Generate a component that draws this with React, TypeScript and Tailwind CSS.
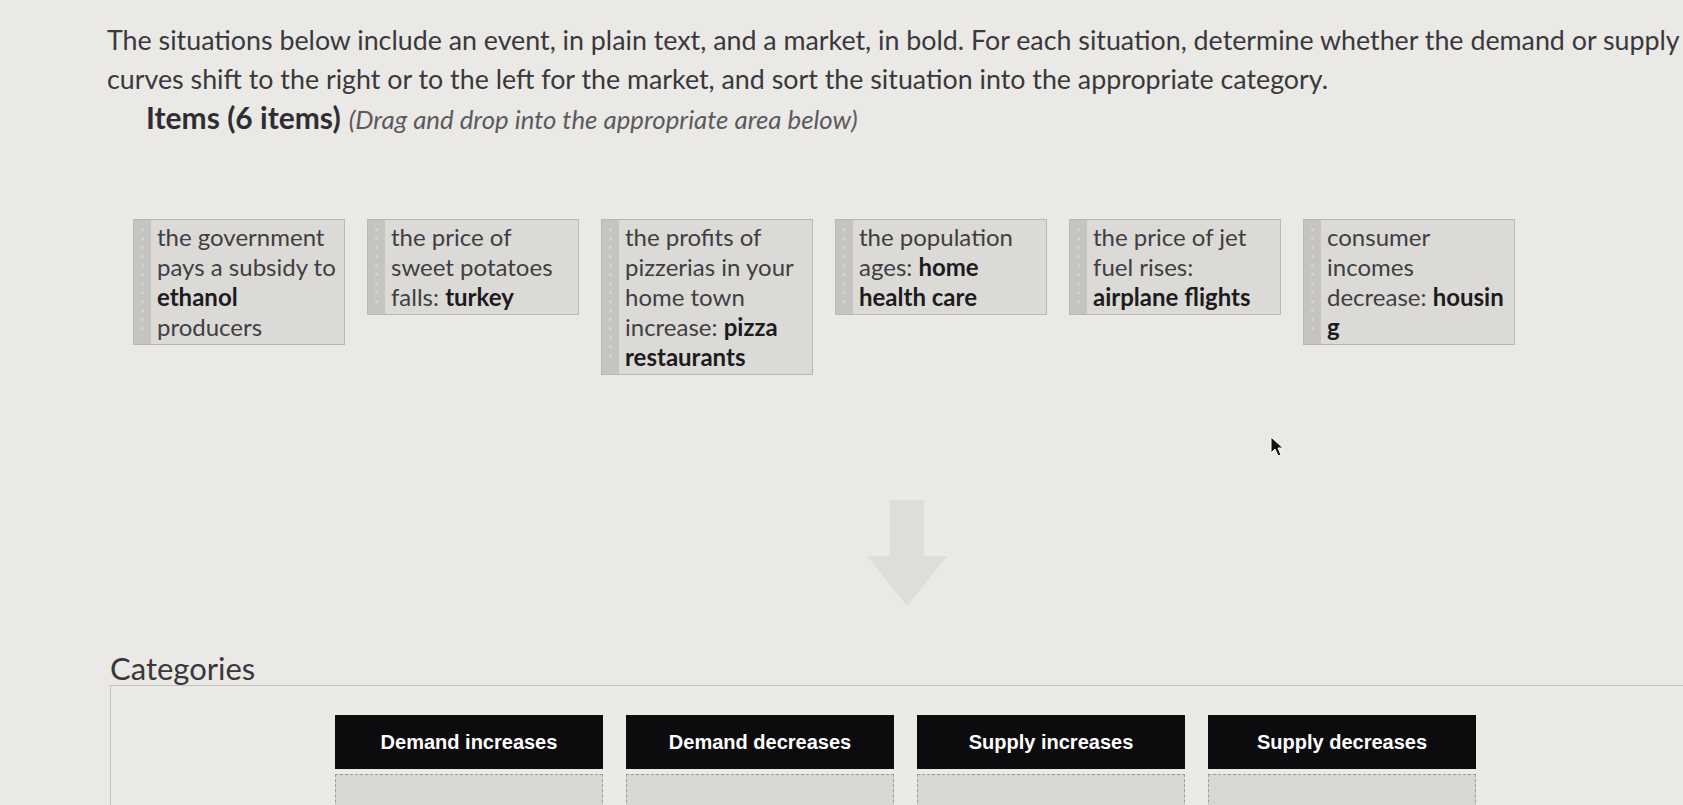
import React from "react";

type Seg = { t: string; b?: boolean };
const cards: Seg[][][] = [
  [[{ t: "the government" }], [{ t: "pays a subsidy to" }], [{ t: "ethanol", b: true }], [{ t: "producers" }]],
  [[{ t: "the price of" }], [{ t: "sweet potatoes" }], [{ t: "falls: " }, { t: "turkey", b: true }]],
  [
    [{ t: "the profits of" }],
    [{ t: "pizzerias in your" }],
    [{ t: "home town" }],
    [{ t: "increase: " }, { t: "pizza", b: true }],
    [{ t: "restaurants", b: true }],
  ],
  [[{ t: "the population" }], [{ t: "ages: " }, { t: "home", b: true }], [{ t: "health care", b: true }]],
  [[{ t: "the price of jet" }], [{ t: "fuel rises:" }], [{ t: "airplane flights", b: true }]],
  [[{ t: "consumer" }], [{ t: "incomes" }], [{ t: "decrease: " }, { t: "housin", b: true }], [{ t: "g", b: true }]],
];

const categories = ["Demand increases", "Demand decreases", "Supply increases", "Supply decreases"];

function Card({ lines }: { lines: Seg[][] }) {
  return (
    <div className="flex w-[212px] shrink-0 border border-[#b9b8b4] bg-[#dbdad6]">
      <div className="flex w-[17px] shrink-0 flex-col items-center justify-start gap-[6px] bg-[#c5c4c0] pt-[8px]">
        {lines.map((_, i) => (
          <React.Fragment key={i}>
            <div className="h-[3px] w-[3px] rounded-full bg-[#d6d5d1]" />
            <div className="h-[3px] w-[3px] rounded-full bg-[#d6d5d1]" />
            <div className="h-[3px] w-[3px] rounded-full bg-[#d6d5d1]" />
          </React.Fragment>
        ))}
      </div>
      <div className="py-[2px] pl-[6px] text-[24px] leading-[30px] text-[#403e43]">
        {lines.map((line, i) => (
          <div key={i} className="whitespace-nowrap">
            {line.map((s, j) =>
              s.b ? (
                <span key={j} className="font-bold text-[#1d1b20]">
                  {s.t}
                </span>
              ) : (
                <span key={j}>{s.t}</span>
              )
            )}
          </div>
        ))}
      </div>
    </div>
  );
}

export default function App() {
  return (
    <div
      className="relative h-[805px] w-[1683px] overflow-hidden bg-[#eae9e5]"
      style={{ fontFamily: "Lato, 'Open Sans', sans-serif" }}
    >
      <div className="pl-[107px] pt-[21px] text-[26.8px] leading-[39px] text-[#3a383d]">
        <div className="whitespace-nowrap">
          The situations below include an event, in plain text, and a market, in bold. For each situation, determine whether the demand or supply
        </div>
        <div className="whitespace-nowrap">
          curves shift to the right or to the left for the market, and sort the situation into the appropriate category.
        </div>
      </div>
      <div className="flex items-baseline gap-[8px] pl-[146px] leading-[36px]">
        <span className="text-[30px] font-bold text-[#2f2d32]">Items (6 items)</span>
        <span className="text-[25.8px] italic text-[#5c5a5f]">(Drag and drop into the appropriate area below)</span>
      </div>

      <div className="mt-[82px] flex items-start gap-[22px] pl-[133px]">
        {cards.map((c, i) => (
          <Card key={i} lines={c} />
        ))}
      </div>

      <div className="mt-[125px] flex pl-[867px]">
        <svg width="80" height="106" viewBox="0 0 80 106">
          <path d="M23 0 H57 V56 H80 L40 106 L0 56 H23 Z" fill="#dedddA" />
        </svg>
      </div>

      <div className="mt-[46px] pl-[110px] text-[31px] leading-[32px] text-[#3a383d]">Categories</div>

      <div className="ml-[110px] mt-[1px] h-[200px] border-l border-t border-[#c3c2be] bg-[#ebeae6] pl-[224px] pt-[29px]">
        <div className="flex gap-[23px]">
          {categories.map((c) => (
            <div key={c} className="flex w-[268px] flex-col">
              <div
                className="flex h-[54px] items-center justify-center bg-[#0c0c0e] text-[20px] font-bold text-white"
                style={{ fontFamily: "'Liberation Sans', Arial, sans-serif" }}
              >
                {c}
              </div>
              <div className="mt-[5px] h-[120px] border border-dashed border-[#9d9c99] bg-[#d8d7d3]" />
            </div>
          ))}
        </div>
      </div>

      <svg className="absolute left-[1270px] top-[436px]" width="16" height="22" viewBox="0 0 16 22">
        <path d="M1 1 L1 17 L5 13 L8 20 L11 19 L8 12 L13 12 Z" fill="#111" stroke="#fff" strokeWidth="1" />
      </svg>
    </div>
  );
}
